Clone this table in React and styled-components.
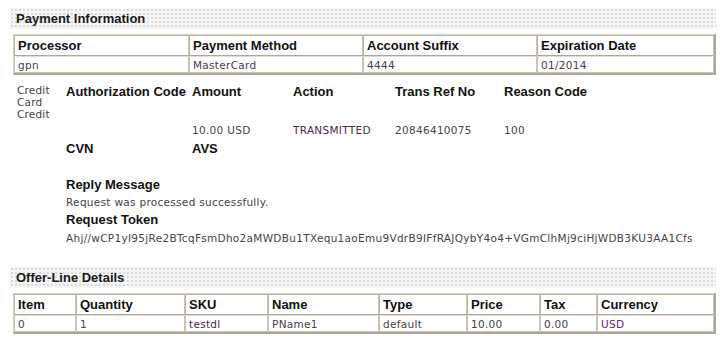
import React from "react";
import styled, { createGlobalStyle } from "styled-components";

const GlobalStyle = createGlobalStyle`
  body {
    margin: 0;
    background: #fff;
    font-family: "Liberation Sans", Arial, sans-serif;
  }
`;

const Page = styled.div`
  width: 723px;
  padding: 8px 0 0 10px;
  box-sizing: border-box;
`;

const SectionBar = styled.div`
  width: 706px;
  height: 21px;
  box-sizing: border-box;
  padding-left: 6px;
  line-height: 22px;
  font-size: 13px;
  font-weight: bold;
  color: #1a1a1a;
  background-color: #f6f6f6;
  background-image: radial-gradient(circle at 1px 1px, #dadada 0.7px, transparent 1px);
  background-size: 4px 4px;
  background-position: 1px 1px;
  margin-top: ${(p) => p.$top || 0}px;
`;

const Table = styled.table`
  width: 700px;
  margin: 5px 0 0 3px;
  table-layout: fixed;
  border-collapse: separate;
  border-spacing: 0;
  border-top: 1px solid #d6d2c2;
  border-left: 1px solid #d6d2c2;
  border-right: 2px solid #aca899;
  border-bottom: 2px solid #aca899;
`;

const Th = styled.th`
  text-align: left;
  font-size: 13px;
  font-weight: bold;
  color: #111;
  height: 19px;
  padding: 0 0 0 3px;
  border: 1px solid #b9b5a3;
  border-right-color: #c9c5b4;
  border-bottom-color: #aca899;
  white-space: nowrap;
`;

const Td = styled.td`
  font-family: "DejaVu Sans", Verdana, sans-serif;
  font-size: 10.5px;
  letter-spacing: 0.3px;
  color: ${(p) => p.$color || "#444"};
  height: 15px;
  padding: 0 0 0 3px;
  border: 1px solid #c9c5b4;
  border-top-color: #e2dfd2;
  white-space: nowrap;
`;

const Details = styled.div`
  display: flex;
  margin-top: 9px;
`;

const SmallText = styled.div`
  font-family: "DejaVu Sans", Verdana, sans-serif;
  font-size: 10.5px;
  letter-spacing: 0.3px;
  line-height: 12px;
  color: ${(p) => p.$color || "#444"};
  white-space: nowrap;
  margin-top: ${(p) => p.$top || 0}px;
`;

const CardType = styled(SmallText)`
  width: 49px;
  padding-left: 7px;
  letter-spacing: 0.2px;
`;

const DetailBody = styled.div`
  display: flex;
  flex-direction: column;
`;

const Grid = styled.div`
  display: grid;
  grid-template-columns: 126px 101px 102px 109px 120px;
`;

const Label = styled.div`
  font-size: 13px;
  font-weight: bold;
  line-height: 16px;
  color: #111;
  white-space: nowrap;
  margin-top: ${(p) => p.$top || 0}px;
`;

const paymentCols = [175, 174, 174, 177];
const offerCols = [62, 109, 83, 111, 88, 73, 57, 117];

const DataTable = ({ cols, heads, row, colors = {} }) => (
  <Table>
    <colgroup>
      {cols.map((w, i) => (
        <col key={i} style={{ width: w }} />
      ))}
    </colgroup>
    <thead>
      <tr>
        {heads.map((h) => (
          <Th key={h}>{h}</Th>
        ))}
      </tr>
    </thead>
    <tbody>
      <tr>
        {row.map((v, i) => (
          <Td key={i} $color={colors[i]}>
            {v}
          </Td>
        ))}
      </tr>
    </tbody>
  </Table>
);

const token =
  "Ahj//wCP1yI95jRe2BTcqFsmDho2aMWDBu1TXequ1aoEmu9VdrB9IFfRAJQybY4o4+VGmClhMj9ciHjWDB3KU3AA1Cfs";

export default function App() {
  return (
    <>
      <GlobalStyle />
      <Page>
        <SectionBar>Payment Information</SectionBar>
        <DataTable
          cols={paymentCols}
          heads={["Processor", "Payment Method", "Account Suffix", "Expiration Date"]}
          row={["gpn", "MasterCard", "4444", "01/2014"]}
          colors={{ 1: "#4a3a4a", 3: "#4a3a4a" }}
        />

        <Details>
          <CardType>
            Credit
            <br />
            Card
            <br />
            Credit
          </CardType>
          <DetailBody>
            <Grid>
              <Label>Authorization Code</Label>
              <Label>Amount</Label>
              <Label>Action</Label>
              <Label>Trans Ref No</Label>
              <Label>Reason Code</Label>

              <SmallText $top={24}></SmallText>
              <SmallText $top={24}>10.00 USD</SmallText>
              <SmallText $top={24} $color="#4a2a4a">
                TRANSMITTED
              </SmallText>
              <SmallText $top={24}>20846410075</SmallText>
              <SmallText $top={24}>100</SmallText>

              <Label $top={5}>CVN</Label>
              <Label $top={5}>AVS</Label>
            </Grid>
            <Label $top={20}>Reply Message</Label>
            <SmallText $top={3}>Request was processed successfully.</SmallText>
            <Label $top={4}>Request Token</Label>
            <SmallText $top={4}>{token}</SmallText>
          </DetailBody>
        </Details>

        <SectionBar $top={23}>Offer-Line Details</SectionBar>
        <DataTable
          cols={offerCols}
          heads={["Item", "Quantity", "SKU", "Name", "Type", "Price", "Tax", "Currency"]}
          row={["0", "1", "testdl", "PName1", "default", "10.00", "0.00", "USD"]}
          colors={{ 2: "#4a2a4a", 7: "#5a2a6a" }}
        />
      </Page>
    </>
  );
}
